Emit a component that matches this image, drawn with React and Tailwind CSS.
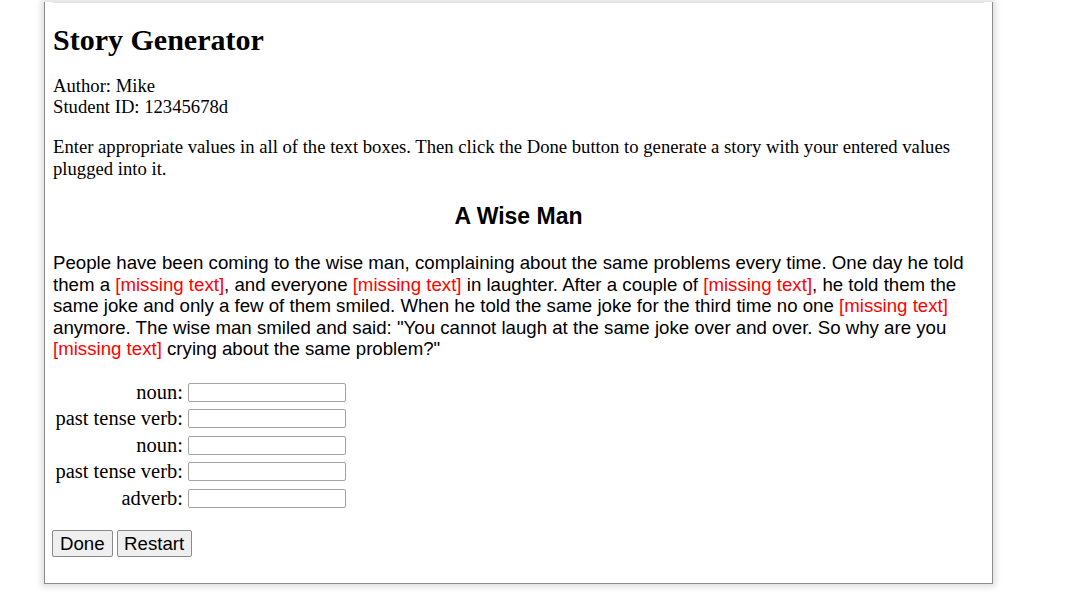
const story = [
  "People have been coming to the wise man, complaining about the same problems every time. One day he told them a ",
  null,
  ", and everyone ",
  null,
  " in laughter. After a couple of ",
  null,
  ", he told them the same joke and only a few of them smiled. When he told the same joke for the third time no one ",
  null,
  " anymore. The wise man smiled and said: \"You cannot laugh at the same joke over and over. So why are you ",
  null,
  " crying about the same problem?\"",
];

const fields = ["noun", "past tense verb", "noun", "past tense verb", "adverb"];

const App = () => {
  return (
    <div className="min-h-[594px] w-full bg-white pl-[44px] font-['Liberation_Serif',serif] text-black">
      <div className="w-[949px] border-x border-b border-[#8c8c8c] bg-white px-[8px] pb-[26px] shadow-[0_0_6px_3px_rgba(0,0,0,0.12)]">
        <div className="mt-[2px] h-px bg-[#e6e6e6]" />

        <h1 className="mt-[20px] text-[30px] leading-[33px] font-bold">Story Generator</h1>

        <p className="mt-[19px] text-[18.67px] leading-[21px]">
          Author: Mike
          <br />
          Student ID: 12345678d
        </p>

        <p className="mt-[19px] text-[18.67px] leading-[21.5px]">
          Enter appropriate values in all of the text boxes. Then click the Done button to generate a story with your
          entered values plugged into it.
        </p>

        <h2 className="mt-[24px] text-center font-['Liberation_Sans',Arial,sans-serif] text-[23px] leading-[26px] font-bold">
          A Wise Man
        </h2>

        <p className="mt-[23px] font-['Liberation_Sans',Arial,sans-serif] text-[18.67px] leading-[21.5px]">
          {story.map((part, i) =>
            part === null ? (
              <span key={i} className="text-[#ff0000]">
                [missing text]
              </span>
            ) : (
              <span key={i}>{part}</span>
            ),
          )}
        </p>

        <div className="mt-[22px] grid w-fit grid-cols-[130px_auto] gap-x-[4.5px] gap-y-[5.65px]">
          {fields.map((label, i) => (
            <div key={i} className="contents">
              <label className="h-[21px] text-right text-[20.5px] leading-[21px] whitespace-nowrap">{label}:</label>
              <div className="flex h-[21px] items-center">
                <input
                  type="text"
                  className="h-[19px] w-[158px] rounded-[2px] border border-[#a3a3a3] bg-white px-[2px] text-[13px] outline-none"
                />
              </div>
            </div>
          ))}
        </div>

        <div className="mt-[21px] flex gap-[4px] font-['Liberation_Sans',Arial,sans-serif]">
          <button className="ml-[-1px] h-[27px] rounded-[2px] border border-[#8a8a8a] bg-[#efefef] px-[7px] text-[18.67px] leading-[21px]">
            Done
          </button>
          <button className="h-[27px] rounded-[2px] border border-[#8a8a8a] bg-[#efefef] px-[6.5px] text-[18.67px] leading-[21px]">
            Restart
          </button>
        </div>
      </div>
    </div>
  );
};

export default App;
